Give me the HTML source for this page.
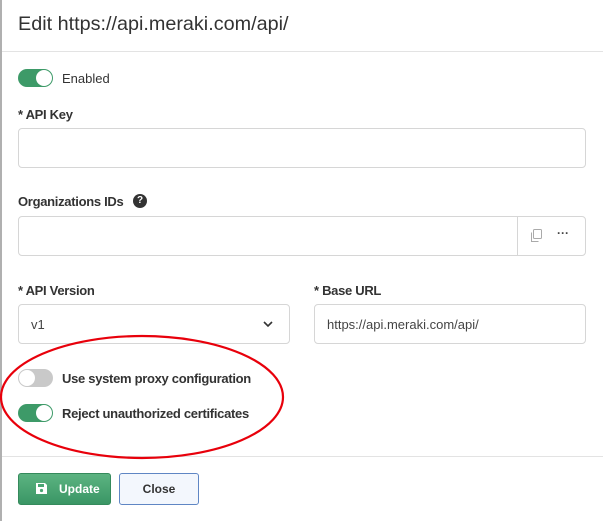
<!DOCTYPE html>
<html><head><style>
body{margin:0;width:603px;height:521px;background:#fff;font-family:"Liberation Sans",sans-serif;position:relative;overflow:hidden;color:#333}
.a{position:absolute}
.lbl{position:absolute;font-size:13px;font-weight:bold;color:#333;letter-spacing:-0.3px}
.inp{position:absolute;border:1px solid #d6d6d6;border-radius:4px;background:#fff;box-sizing:border-box}
.tg{position:absolute;width:35px;height:18px;border-radius:9px;background:#3d9a68}
.tg::after{content:"";position:absolute;top:1px;right:1px;width:16px;height:16px;border-radius:50%;background:#fff}
.off{background:#c9c9c9}.off::after{left:1px;right:auto}
.t{position:absolute;font-size:13px}
</style></head><body>
<div class="a" style="left:0;top:0;width:2px;height:521px;background:#b0b0b0"></div>
<div class="a" style="left:18px;top:13px;font-size:19.8px;color:#333">Edit https://api.meraki.com/api/</div>
<div class="a" style="left:2px;top:51px;width:601px;height:1px;background:#e3e3e3"></div>
<div class="tg" style="left:18px;top:69px"></div>
<div class="t" style="left:62px;top:71px;color:#333">Enabled</div>
<div class="lbl" style="left:18px;top:107px">* API Key</div>
<div class="inp" style="left:18px;top:128px;width:568px;height:40px"></div>
<div class="lbl" style="left:18px;top:194px">Organizations IDs</div>
<div class="a" style="left:133px;top:194px;width:14px;height:14px;border-radius:50%;background:#333;color:#fff;font-size:10px;font-weight:bold;text-align:center;line-height:14px">?</div>
<div class="inp" style="left:18px;top:216px;width:568px;height:40px"></div>
<div class="a" style="left:517px;top:217px;width:1px;height:38px;background:#d6d6d6"></div>
<svg class="a" style="left:528px;top:228px" width="16" height="16" viewBox="0 0 16 16" fill="none" stroke="#aaa" stroke-width="1"><rect x="5.5" y="1.5" width="8" height="9" rx="1"/><path d="M3.5 4.5v9h7"/></svg>
<div class="a" style="left:557px;top:226px;font-size:12px;font-weight:bold;color:#444">···</div>
<div class="lbl" style="left:18px;top:283px">* API Version</div>
<div class="inp" style="left:18px;top:304px;width:272px;height:40px"></div>
<div class="t" style="left:31px;top:317px;color:#444">v1</div>
<svg class="a" style="left:262px;top:320px" width="12" height="8" viewBox="0 0 12 8"><path d="M2 2l4 4 4-4" fill="none" stroke="#333" stroke-width="1.6"/></svg>
<div class="lbl" style="left:314px;top:283px">* Base URL</div>
<div class="inp" style="left:314px;top:304px;width:272px;height:40px"></div>
<div class="t" style="left:327px;top:317px;color:#444">https://api.meraki.com/api/</div>
<div class="tg off" style="left:18px;top:369px"></div>
<div class="lbl" style="left:62px;top:371px">Use system proxy configuration</div>
<div class="tg" style="left:18px;top:404px"></div>
<div class="lbl" style="left:62px;top:406px">Reject unauthorized certificates</div>
<div class="a" style="left:2px;top:456px;width:601px;height:1px;background:#e3e3e3"></div>
<div class="a" style="left:18px;top:473px;width:93px;height:32px;border-radius:3px;background:linear-gradient(#5cb381,#3a9665);box-sizing:border-box;border:1px solid #358a5c"></div>
<svg class="a" style="left:35px;top:482px" width="13" height="13" viewBox="0 0 13 13"><path d="M1 1h9l2 2v9H1z" fill="#fff"/><rect x="3" y="2" width="6" height="3" fill="#4aa673"/><circle cx="6.5" cy="8.5" r="1.6" fill="#4aa673"/></svg>
<div class="a" style="left:59px;top:482px;font-size:12px;font-weight:bold;color:#fff">Update</div>
<div class="a" style="left:119px;top:473px;width:80px;height:32px;border-radius:3px;background:#f3f7fd;border:1px solid #5f86c4;box-sizing:border-box;text-align:center;line-height:30px;font-size:12px;font-weight:bold;color:#333">Close</div>
<svg class="a" style="left:0;top:0" width="603" height="521"><ellipse cx="142" cy="397" rx="141" ry="61" fill="none" stroke="#e8000b" stroke-width="2.2"/></svg>
</body></html>
